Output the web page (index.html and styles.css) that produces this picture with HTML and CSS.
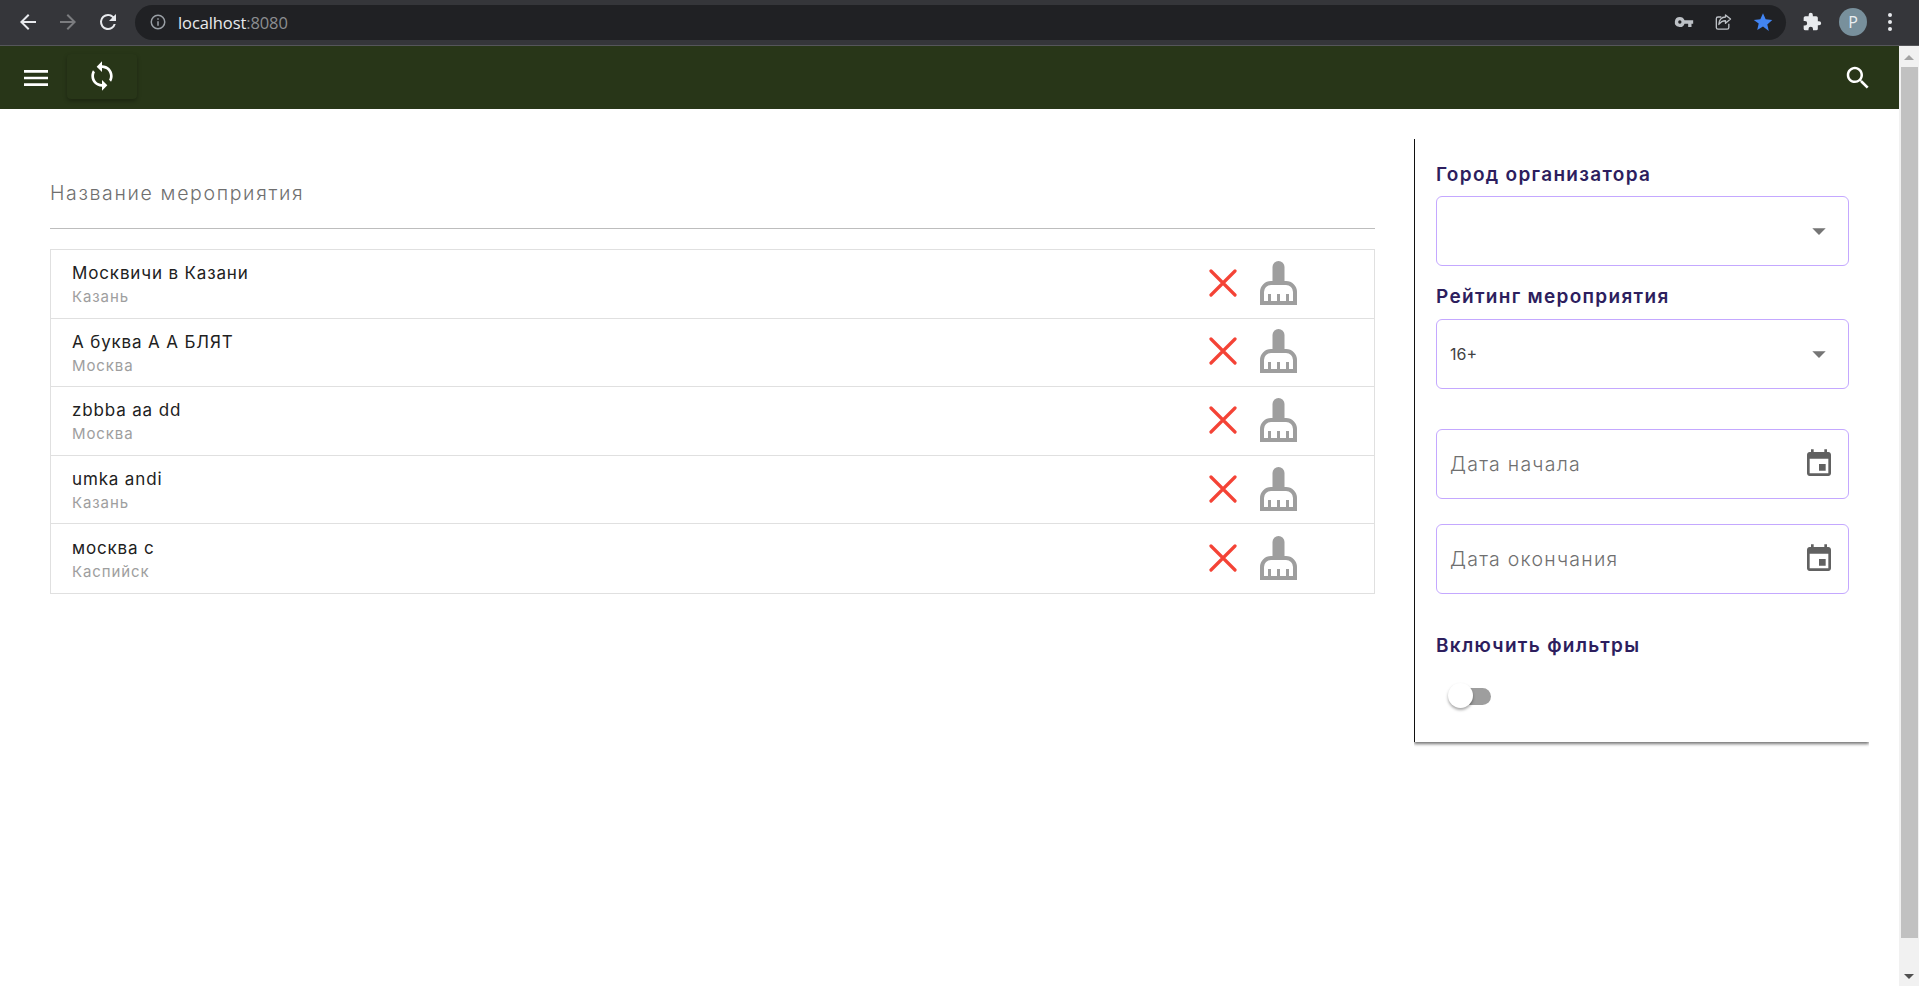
FILE: index.html
```html
<!DOCTYPE html>
<html lang="ru">
<head>
<meta charset="utf-8">
<title>localhost:8080</title>
<link rel="stylesheet" href="styles.css">
</head>
<body>
<header class="browser">
  <div class="nav">
    <svg class="nav-icon" viewBox="0 0 24 24"><path fill="#e8eaed" d="M20 11H7.83l5.59-5.59L12 4l-8 8 8 8 1.41-1.41L7.83 13H20v-2z"/></svg>
    <svg class="nav-icon" viewBox="0 0 24 24"><path fill="#7b7c7f" d="M4 11h12.17l-5.59-5.59L12 4l8 8-8 8-1.41-1.41L16.17 13H4v-2z"/></svg>
    <svg class="nav-icon" viewBox="0 0 24 24"><path fill="#e8eaed" d="M17.65 6.35A7.96 7.96 0 0 0 12 4a8 8 0 1 0 7.73 10h-2.08A6 6 0 1 1 12 6c1.66 0 3.14.69 4.22 1.78L13 11h7V4l-2.35 2.35z"/></svg>
  </div>
  <div class="omnibox">
    <svg class="info" viewBox="0 0 24 24"><path fill="#9aa0a6" d="M11 7h2v2h-2zm0 4h2v6h-2zm1-9a10 10 0 1 0 0 20 10 10 0 0 0 0-20zm0 18a8 8 0 1 1 0-16 8 8 0 0 1 0 16z"/></svg>
    <span class="url">localhost<span class="port">:8080</span></span>
    <span class="omni-actions">
      <svg class="omni-icon" viewBox="0 0 24 24"><path fill="#bdc1c6" d="M12.65 10A6 6 0 0 0 7 6a6 6 0 1 0 5.65 8H17v4h4v-4h2v-4H12.65zM7 14a2 2 0 1 1 0-4 2 2 0 0 1 0 4z"/></svg>
      <svg class="omni-icon" viewBox="0 0 24 24"><path fill="none" stroke="#bdc1c6" stroke-width="1.6" stroke-linejoin="round" d="M19 14v4.500a2 2 0 0 1-2 2H6a2 2 0 0 1-2-2V8a2 2 0 0 1 2-2h4"/><path fill="none" stroke="#bdc1c6" stroke-width="1.6" stroke-linejoin="round" d="M15 3.500l6 5-6 5v-3c-4 0-6 1.500-8 4.500 0-5 3-9 8-9z"/></svg>
      <svg class="omni-icon star" viewBox="0 0 24 24"><path fill="#4285f4" d="M12 2.500l2.900 6.600 7.200.7-5.400 4.800 1.600 7.100L12 17l-6.300 3.700 1.600-7.100L1.900 9.800l7.200-.7z"/></svg>
    </span>
  </div>
  <div class="browser-actions">
    <svg class="puzzle" viewBox="0 0 24 24"><path fill="#e8eaed" d="M20.500 11H19V7a2 2 0 0 0-2-2h-4V3.500a2.500 2.500 0 0 0-5 0V5H4a2 2 0 0 0-2 2v3.800h1.500a2.700 2.700 0 0 1 0 5.400H2V20a2 2 0 0 0 2 2h3.800v-1.500a2.700 2.700 0 0 1 5.400 0V22H17a2 2 0 0 0 2-2v-4h1.500a2.500 2.500 0 0 0 0-5z"/></svg>
    <span class="avatar">P</span>
    <span class="kebab"><i></i><i></i><i></i></span>
  </div>
</header>

<div class="viewport">
  <div class="page">
    <div class="appbar">
      <button class="icon-btn menu-btn" aria-label="Меню">
        <svg class="bar-icon" viewBox="0 0 24 24"><path d="M3 18h18v-2H3v2zm0-5h18v-2H3v2zm0-7v2h18V6H3z"/></svg>
      </button>
      <button class="icon-btn sync-btn" aria-label="Обновить">
        <svg class="bar-icon" viewBox="0 0 24 24"><path d="M12 4V1L8 5l4 4V6c3.310 0 6 2.690 6 6 0 1.010-.25 1.970-.7 2.800l1.460 1.460C19.540 15.030 20 13.570 20 12c0-4.420-3.580-8-8-8zm0 14c-3.310 0-6-2.690-6-6 0-1.010.25-1.970.7-2.800L5.240 7.740C4.460 8.970 4 10.430 4 12c0 4.420 3.580 8 8 8v3l4-4-4-4v3z"/></svg>
      </button>
      <button class="icon-btn search-btn" aria-label="Поиск">
        <svg class="bar-icon" viewBox="0 0 24 24"><path d="M15.500 14h-.79l-.28-.27C15.410 12.590 16 11.110 16 9.500 16 5.910 13.090 3 9.500 3S3 5.910 3 9.500 5.910 16 9.500 16c1.610 0 3.090-.59 4.230-1.570l.27.28v.79l5 4.990L20.490 19l-4.990-5zm-6 0C7.010 14 5 11.990 5 9.500S7.010 5 9.500 5 14 7.010 14 9.500 11.990 14 9.500 14z"/></svg>
      </button>
    </div>

    <main class="content">
      <section class="events">
        <div class="search-field">Название мероприятия</div>
        <ul class="event-list">
          <li class="event">
            <div class="event-text"><div class="event-name">Москвичи в Казани</div><div class="event-city">Казань</div></div>
            <svg class="x-icon" viewBox="0 0 28 28"><path d="M2 2l24 24M26 2L2 26"/></svg>
            <svg class="broom" viewBox="0 0 37 44"><path d="M12.500 21V6a6 6 0 0 1 12 0v15z"/><path fill-rule="evenodd" d="M0 44V31a11 11 0 0 1 11-11h15a11 11 0 0 1 11 11v13zM4 40h4v-7h3v7h6v-7h3v7h6v-7h3v7h4v-9a7 7 0 0 0-7-7H11a7 7 0 0 0-7 7z"/></svg>
          </li>
          <li class="event">
            <div class="event-text"><div class="event-name">А буква А А БЛЯТ</div><div class="event-city">Москва</div></div>
            <svg class="x-icon" viewBox="0 0 28 28"><path d="M2 2l24 24M26 2L2 26"/></svg>
            <svg class="broom" viewBox="0 0 37 44"><path d="M12.500 21V6a6 6 0 0 1 12 0v15z"/><path fill-rule="evenodd" d="M0 44V31a11 11 0 0 1 11-11h15a11 11 0 0 1 11 11v13zM4 40h4v-7h3v7h6v-7h3v7h6v-7h3v7h4v-9a7 7 0 0 0-7-7H11a7 7 0 0 0-7 7z"/></svg>
          </li>
          <li class="event">
            <div class="event-text"><div class="event-name">zbbba aa dd</div><div class="event-city">Москва</div></div>
            <svg class="x-icon" viewBox="0 0 28 28"><path d="M2 2l24 24M26 2L2 26"/></svg>
            <svg class="broom" viewBox="0 0 37 44"><path d="M12.500 21V6a6 6 0 0 1 12 0v15z"/><path fill-rule="evenodd" d="M0 44V31a11 11 0 0 1 11-11h15a11 11 0 0 1 11 11v13zM4 40h4v-7h3v7h6v-7h3v7h6v-7h3v7h4v-9a7 7 0 0 0-7-7H11a7 7 0 0 0-7 7z"/></svg>
          </li>
          <li class="event">
            <div class="event-text"><div class="event-name">umka andi</div><div class="event-city">Казань</div></div>
            <svg class="x-icon" viewBox="0 0 28 28"><path d="M2 2l24 24M26 2L2 26"/></svg>
            <svg class="broom" viewBox="0 0 37 44"><path d="M12.500 21V6a6 6 0 0 1 12 0v15z"/><path fill-rule="evenodd" d="M0 44V31a11 11 0 0 1 11-11h15a11 11 0 0 1 11 11v13zM4 40h4v-7h3v7h6v-7h3v7h6v-7h3v7h4v-9a7 7 0 0 0-7-7H11a7 7 0 0 0-7 7z"/></svg>
          </li>
          <li class="event">
            <div class="event-text"><div class="event-name">москва с</div><div class="event-city">Каспийск</div></div>
            <svg class="x-icon" viewBox="0 0 28 28"><path d="M2 2l24 24M26 2L2 26"/></svg>
            <svg class="broom" viewBox="0 0 37 44"><path d="M12.500 21V6a6 6 0 0 1 12 0v15z"/><path fill-rule="evenodd" d="M0 44V31a11 11 0 0 1 11-11h15a11 11 0 0 1 11 11v13zM4 40h4v-7h3v7h6v-7h3v7h6v-7h3v7h4v-9a7 7 0 0 0-7-7H11a7 7 0 0 0-7 7z"/></svg>
          </li>
        </ul>
      </section>

      <aside class="filters">
        <div class="filter-label">Город организатора</div>
        <div class="field">
          <span class="field-value"></span>
          <svg class="caret" viewBox="0 0 24 24"><path d="M7 10l5 5 5-5z"/></svg>
        </div>
        <div class="filter-label second">Рейтинг мероприятия</div>
        <div class="field">
          <span class="field-value">16+</span>
          <svg class="caret" viewBox="0 0 24 24"><path d="M7 10l5 5 5-5z"/></svg>
        </div>
        <div class="field date first-date">
          <span class="field-placeholder">Дата начала</span>
          <svg class="cal" viewBox="0 0 24 24"><path d="M17 12h-5v5h5v-5zM16 1v2H8V1H6v2H5c-1.110 0-1.990.9-1.990 2L3 19c0 1.100.89 2 2 2h14c1.100 0 2-.9 2-2V5c0-1.100-.9-2-2-2h-1V1h-2zm3 18H5V8h14v11z"/></svg>
        </div>
        <div class="field date">
          <span class="field-placeholder">Дата окончания</span>
          <svg class="cal" viewBox="0 0 24 24"><path d="M17 12h-5v5h5v-5zM16 1v2H8V1H6v2H5c-1.110 0-1.990.9-1.990 2L3 19c0 1.100.89 2 2 2h14c1.100 0 2-.9 2-2V5c0-1.100-.9-2-2-2h-1V1h-2zm3 18H5V8h14v11z"/></svg>
        </div>
        <div class="filter-label toggle-label">Включить фильтры</div>
        <div class="toggle"><span class="toggle-track"></span><span class="toggle-thumb"></span></div>
      </aside>
    </main>
  </div>
  <div class="scrollbar">
    <span class="arrow-up"></span>
    <span class="thumb"></span>
    <span class="arrow-down"></span>
  </div>
</div>
</body>
</html>
```

FILE: styles.css
```css
* { box-sizing: border-box; }
html, body { margin: 0; height: 100%; overflow: hidden; }
body {
  width: 1919px;
  height: 986px;
  display: flex;
  flex-direction: column;
  background: #fff;
  font-family: Inter, "Noto Sans", sans-serif;
}

/* browser chrome */
.browser {
  height: 46px;
  flex: none;
  display: flex;
  align-items: center;
  background: #35363a;
  border-bottom: 1px solid #55565a;
  padding-bottom: 1px;
}
.nav { width: 135px; flex: none; display: flex; align-items: center; padding-left: 16px; gap: 16px; }
.nav-icon { width: 24px; height: 24px; flex: none; }
.omnibox {
  width: 1651px;
  height: 35px;
  flex: none;
  display: flex;
  align-items: center;
  padding: 0 12px 0 14px;
  background: #202124;
  border-radius: 18px;
}
.info { width: 18px; height: 18px; flex: none; }
.url { margin-left: 11px; font: 16.5px "Open Sans", sans-serif; color: #e8eaed; letter-spacing: -.1px; }
.port { color: #8c8e91; }
.omni-actions { margin-left: auto; display: flex; align-items: center; gap: 19px; }
.omni-icon { width: 20px; height: 20px; }
.star { width: 22px; height: 22px; }
.browser-actions { flex: 1; display: flex; align-items: center; padding-left: 16px; }
.puzzle { width: 20px; height: 20px; }
.avatar {
  width: 28px; height: 28px; margin-left: 17px;
  display: flex; align-items: center; justify-content: center;
  border-radius: 50%;
  background: #78909c; color: #eceff1;
  font: 16px "Open Sans", sans-serif;
}
.kebab { margin-left: 21px; display: flex; flex-direction: column; gap: 3px; }
.kebab i { width: 4px; height: 4px; border-radius: 50%; background: #e8eaed; }

/* page */
.viewport { flex: 1; min-height: 0; display: flex; }
.page { flex: 1; min-width: 0; }
.scrollbar {
  width: 20px; flex: none;
  display: flex; flex-direction: column; align-items: flex-end;
  background: #f1f1f1;
}
.arrow-up {
  width: 0; height: 0; margin: 9px 5px 0 0;
  border: 5px solid transparent; border-top: 0;
  border-bottom: 5px solid #a3a3a3;
}
.thumb { width: 17px; height: 871px; margin-top: 7px; margin-right: 1px; background: #c1c1c1; }
.arrow-down {
  width: 0; height: 0; margin: 36px 5px 0 0;
  border: 5px solid transparent; border-bottom: 0;
  border-top: 5px solid #505050;
}

/* app bar */
.appbar {
  height: 63px;
  display: flex;
  align-items: center;
  background: #283618;
  padding: 0 26px 0 20px;
}
.icon-btn { border: 0; padding: 0; background: transparent; display: flex; align-items: center; justify-content: center; }
.bar-icon { width: 32px; height: 32px; fill: #fff; display: block; }
.menu-btn { width: 32px; height: 44px; margin-right: 15px; }
.sync-btn {
  width: 70px; height: 45px;
  margin-top: -3px;
  border-radius: 4px;
  background: #283618;
  box-shadow: 0 2px 4px rgba(0,0,0,.3);
}
.search-btn { margin-left: auto; }
.search-btn .bar-icon { width: 30px; height: 30px; }

/* main */
.content { display: flex; align-items: flex-start; padding: 30px 30px 0 50px; }
.events { width: 1325px; flex: none; padding-top: 30px; }
.search-field {
  height: 60px;
  border-bottom: 1px solid #bdbdbd;
  font-size: 19.5px;
  font-weight: 300;
  line-height: 48px;
  color: #6f6f6f;
  letter-spacing: 1.65px;
}
.event-list { list-style: none; margin: 20px 0 0; padding: 0; border: 1px solid #e0e0e0; }
.event {
  height: 68.6px;
  display: flex;
  align-items: center;
  padding-left: 21px;
  border-bottom: 1px solid #e0e0e0;
}
.event:last-child { border-bottom: 0; }
.event-text { flex: 1; min-width: 0; padding-top: 2px; }
.event-name { font-size: 17px; line-height: 22px; color: #212121; letter-spacing: .85px; }
.event-city { font-size: 15px; line-height: 20px; margin-top: 3px; color: #9e9e9e; letter-spacing: .9px; }
.x-icon { width: 28px; height: 28px; flex: none; margin-top: -2px; fill: none; stroke: #f44336; stroke-width: 3.2; stroke-linecap: round; }
.broom { width: 37px; height: 44px; flex: none; margin: -2px 77px 0 23px; fill: #9e9e9e; }

/* filters */
.filters {
  width: 455px;
  margin-left: 39px;
  height: 603px;
  flex: none;
  padding: 21px 20px 0 21px;
  border-left: 1px solid #111;
  box-shadow: 0 2px 3px rgba(0,0,0,.55);
  clip-path: inset(0 0 -8px 0);
}
.filter-label { font-size: 19px; font-weight: 600; line-height: 30px; color: #2d1e5e; letter-spacing: 1.3px; }
.filter-label.second { margin-top: 16px; }
.field {
  height: 70px;
  margin-top: 6px;
  padding: 0 13px 0 14px;
  display: flex;
  align-items: center;
  border: 1px solid #c4a8ff;
  border-radius: 6px;
}
.filter-label.second + .field { margin-top: 7px; }
.field-value { flex: 1; font-size: 16px; color: #424242; margin-left: -1px; }
.caret { width: 32px; height: 32px; fill: #757575; flex: none; }
.date { margin-top: 25px; }
.first-date { margin-top: 40px; }
.field-placeholder { flex: 1; font-size: 19.5px; font-weight: 300; color: #6f6f6f; letter-spacing: 1.25px; margin: -1px 0 0 -1px; }
.cal { width: 32px; height: 32px; fill: #616161; flex: none; }
.toggle-label { margin-top: 37px; }
.toggle { position: relative; width: 50px; height: 30px; margin: 20px 0 0 11px; }
.toggle-track { position: absolute; left: 14px; top: 7px; width: 30px; height: 17px; border-radius: 9px; background: #9e9e9e; }
.toggle-thumb { position: absolute; left: 1px; top: 2px; width: 25px; height: 25px; border-radius: 50%; background: #fff; box-shadow: 0 2px 3px rgba(0,0,0,.35); }
```
